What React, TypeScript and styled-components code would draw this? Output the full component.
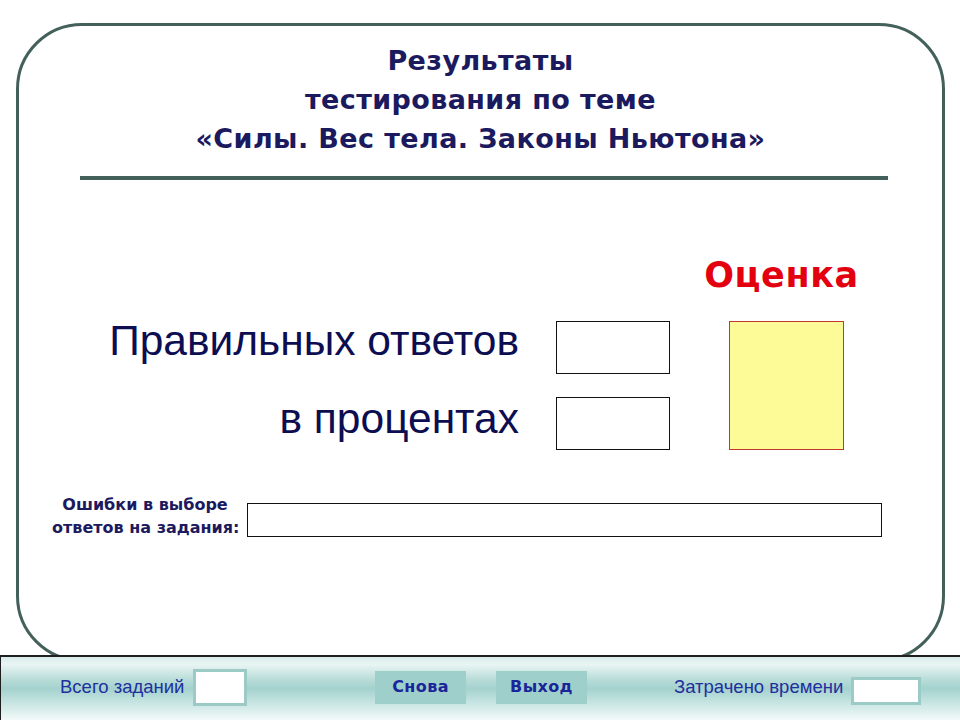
import React from "react";
import styled, { createGlobalStyle } from "styled-components";

const GlobalStyle = createGlobalStyle`
  html, body {
    margin: 0;
    padding: 0;
    background: #ffffff;
  }
  body {
    font-family: "Liberation Sans", Arial, sans-serif;
  }
`;

const boldFont = `"DejaVu Sans", Verdana, sans-serif`;

const Page = styled.div`
  width: 960px;
  height: 720px;
  overflow: hidden;
  display: flex;
  flex-direction: column;
  background: #ffffff;
`;

const Frame = styled.div`
  box-sizing: border-box;
  width: 929px;
  height: 639px;
  margin: 23px 0 0 16px;
  border: 3px solid #44605b;
  border-radius: 66px;
  background: #ffffff;
  display: flex;
  flex-direction: column;
`;

const Title = styled.h1`
  margin: 15px 0 0;
  font-family: ${boldFont};
  font-size: 27px;
  letter-spacing: 0.4px;
  line-height: 39px;
  font-weight: bold;
  text-align: center;
  color: #1c1a5e;
`;

const Rule = styled.div`
  height: 4px;
  margin: 18px 54px 0 61px;
  background: #44605b;
`;

const ScoreGrid = styled.div`
  display: grid;
  grid-template-columns: 1fr 37px 114px 59px 115px;
  grid-template-rows: 43px 53px 53px;
  row-gap: 23px;
  margin-top: 75px;
  padding-right: 98px;
`;

const GradeTitle = styled.div`
  grid-column: 5;
  grid-row: 1;
  justify-self: center;
  align-self: start;
  margin-left: -10px;
  font-family: ${boldFont};
  font-size: 35px;
  letter-spacing: 0.6px;
  line-height: 40px;
  font-weight: bold;
  color: #e3000f;
  white-space: nowrap;
`;

const Label = styled.div<{ $row: number; $shift?: number }>`
  grid-column: 1;
  grid-row: ${({ $row }) => $row};
  justify-self: end;
  align-self: start;
  margin-top: ${({ $shift }) => $shift ?? 0}px;
  font-size: 42.5px;
  line-height: 40px;
  color: #0d0d52;
  white-space: nowrap;
`;

const ValueBox = styled.div<{ $row: number }>`
  grid-column: 3;
  grid-row: ${({ $row }) => $row};
  box-sizing: border-box;
  border: 1px solid #111111;
  background: #ffffff;
`;

const GradeBox = styled.div`
  grid-column: 5;
  grid-row: 2 / span 2;
  box-sizing: border-box;
  border: 1px solid #c0392b;
  background: #fdfa98;
`;

const ErrorsRow = styled.div`
  display: flex;
  align-items: center;
  gap: 9px;
  margin: 43px 0 0 33px;
`;

const ErrorsLabel = styled.div`
  width: 186px;
  font-family: ${boldFont};
  font-size: 16px;
  line-height: 23px;
  font-weight: bold;
  text-align: center;
  color: #1c1a5e;
  white-space: nowrap;
`;

const ErrorsBox = styled.div`
  box-sizing: border-box;
  width: 635px;
  height: 34px;
  margin-top: 8px;
  border: 1px solid #111111;
  background: #ffffff;
`;

const Footer = styled.div`
  box-sizing: border-box;
  height: 65px;
  margin-top: -7px;
  border-top: 2px solid #1e1e1e;
  border-left: 1px solid #1e1e1e;
  background: linear-gradient(
    180deg,
    #d8ecea 0%,
    #e9f5f3 12%,
    #b8dcd8 36%,
    #a4d2ce 50%,
    #c6e4e1 72%,
    #f3faf9 100%
  );
  display: flex;
  align-items: center;
  padding: 0 0 3px 59px;
`;

const Group = styled.div<{ $width: number; $left?: number }>`
  width: ${({ $width }) => $width}px;
  display: flex;
  align-items: center;
  justify-content: space-between;
  margin-left: ${({ $left }) => $left ?? 0}px;
`;

const FooterText = styled.span`
  font-size: 18.5px;
  color: #1f2f9e;
  white-space: nowrap;
`;

const CounterBox = styled.div<{ $w: number; $h: number; $down?: number }>`
  box-sizing: border-box;
  width: ${({ $w }) => $w}px;
  height: ${({ $h }) => $h}px;
  margin-top: ${({ $down }) => $down ?? 0}px;
  border: 3px solid #9ccbc7;
  background: #ffffff;
`;

const NavButton = styled.button`
  box-sizing: border-box;
  width: 91px;
  height: 33px;
  padding: 0 0 2px;
  border: none;
  background: #9fcfcb;
  font-family: ${boldFont};
  font-size: 16px;
  letter-spacing: 0.4px;
  font-weight: bold;
  color: #1a259a;
  cursor: pointer;
`;

export default function App() {
  return (
    <Page>
      <GlobalStyle />
      <Frame>
        <Title>
          Результаты
          <br />
          тестирования по теме
          <br />
          «Силы. Вес тела. Законы Ньютона»
        </Title>
        <Rule />
        <ScoreGrid>
          <GradeTitle>Оценка</GradeTitle>
          <Label $row={2}>Правильных ответов</Label>
          <ValueBox $row={2} />
          <Label $row={3} $shift={2}>
            в процентах
          </Label>
          <ValueBox $row={3} />
          <GradeBox />
        </ScoreGrid>
        <ErrorsRow>
          <ErrorsLabel>
            Ошибки в выборе
            <br />
            ответов на задания:
          </ErrorsLabel>
          <ErrorsBox />
        </ErrorsRow>
      </Frame>
      <Footer>
        <Group $width={187}>
          <FooterText>Всего заданий</FooterText>
          <CounterBox $w={54} $h={37} />
        </Group>
        <Group $width={212} $left={128}>
          <NavButton>Снова</NavButton>
          <NavButton>Выход</NavButton>
        </Group>
        <Group $width={247} $left={87}>
          <FooterText>Затрачено времени</FooterText>
          <CounterBox $w={70} $h={28} $down={8} />
        </Group>
      </Footer>
    </Page>
  );
}
